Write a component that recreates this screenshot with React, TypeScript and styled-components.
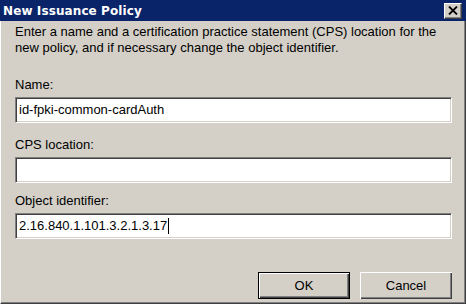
import React from "react";
import styled, { createGlobalStyle } from "styled-components";

const Global = createGlobalStyle`
  html, body { margin: 0; padding: 0; background: #d4d0c8; }
  * { box-sizing: border-box; }
`;

const Window = styled.div`
  width: 466px;
  height: 304px;
  background: #d4d0c8;
  display: flex;
  flex-direction: column;
  font-family: "Liberation Sans", Arial, sans-serif;
  font-size: 13px;
  color: #000;
  overflow: hidden;
`;

const TitleBar = styled.div`
  height: 21px;
  background: #0a246a;
  display: flex;
  align-items: center;
  justify-content: space-between;
  padding: 0 4px 0 3px;
  flex-shrink: 0;
`;

const Title = styled.span`
  color: #fff;
  font-family: "DejaVu Sans", Verdana, sans-serif;
  font-weight: bold;
  font-size: 12px;
  letter-spacing: 0.1px;
`;

const CloseButton = styled.div`
  width: 18px;
  height: 16px;
  background: #d4d0c8;
  border-top: 1px solid #fff;
  border-left: 1px solid #fff;
  border-right: 1px solid #404040;
  border-bottom: 1px solid #404040;
  box-shadow: inset -1px -1px 0 #808080;
  display: flex;
  align-items: center;
  justify-content: center;
`;

const Frame = styled.div`
  flex: 1;
  display: flex;
  flex-direction: column;
  border-left: 1px solid #fff;
  border-right: 1px solid #404040;
  border-bottom: 1px solid #404040;
  box-shadow: inset -1px -1px 0 #808080;
  padding: 3px 13px 0 14px;
`;

const Description = styled.p`
  margin: 0;
  line-height: 16px;
`;

const Field = styled.div<{ $top: number }>`
  display: flex;
  flex-direction: column;
  margin-top: ${(p) => p.$top}px;
`;

const Label = styled.label`
  line-height: 16px;
  margin-bottom: 4px;
`;

const Input = styled.div`
  height: 26px;
  background: #fff;
  border-top: 1px solid #808080;
  border-left: 1px solid #808080;
  border-right: 1px solid #fff;
  border-bottom: 1px solid #fff;
  box-shadow: inset 1px 1px 0 #404040, inset -1px -1px 0 #d4d0c8;
  display: flex;
  align-items: center;
  padding-left: 3px;
  line-height: 16px;
`;

const Caret = styled.span`
  display: inline-block;
  width: 1px;
  height: 16px;
  background: #000;
  margin-left: 1px;
`;

const ButtonRow = styled.div`
  display: flex;
  justify-content: flex-end;
  gap: 10px;
  margin-top: auto;
  margin-bottom: 4px;
`;

const Button = styled.div<{ $default?: boolean }>`
  width: 92px;
  height: 27px;
  background: #d4d0c8;
  display: flex;
  align-items: center;
  justify-content: center;
  border: ${(p) => (p.$default ? "1px solid #000" : "none")};
  box-shadow: inset 1px 1px 0 #fff, inset -1px -1px 0 #404040, inset -2px -2px 0 #808080;
  font-family: "Liberation Sans Narrow", "Liberation Sans", Arial, sans-serif;
  font-size: 13px;
`;

export default function App() {
  return (
    <>
      <Global />
      <Window>
        <TitleBar>
          <Title>New Issuance Policy</Title>
          <CloseButton>
            <svg width="10" height="9" viewBox="0 0 10 9">
              <path d="M1 0.5 L9 8.5 M9 0.5 L1 8.5" stroke="#000" strokeWidth="1.8" />
            </svg>
          </CloseButton>
        </TitleBar>
        <Frame>
          <Description>
            Enter a name and a certification practice statement (CPS) location for the
            <br />
            new policy, and if necessary change the object identifier.
          </Description>
          <Field $top={21}>
            <Label>Name:</Label>
            <Input>id-fpki-common-cardAuth</Input>
          </Field>
          <Field $top={14}>
            <Label>CPS location:</Label>
            <Input />
          </Field>
          <Field $top={10}>
            <Label>Object identifier:</Label>
            <Input>
              2.16.840.1.101.3.2.1.3.17
              <Caret />
            </Input>
          </Field>
          <ButtonRow>
            <Button $default>OK</Button>
            <Button>Cancel</Button>
          </ButtonRow>
        </Frame>
      </Window>
    </>
  );
}
